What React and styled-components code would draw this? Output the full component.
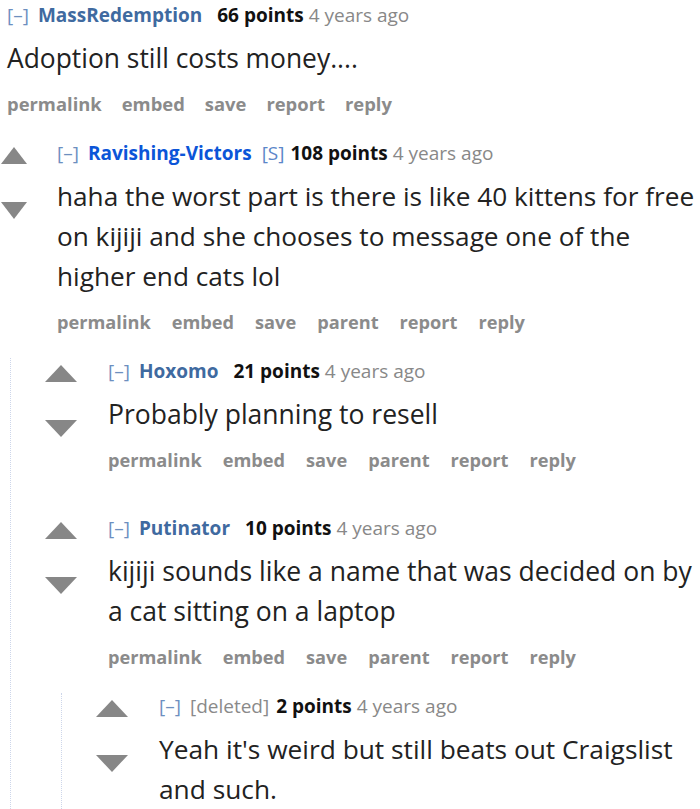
import styled, { createGlobalStyle } from 'styled-components'

const GlobalStyle = createGlobalStyle`
  body {
    margin: 0;
    background: #ffffff;
    font-family: "Open Sans", "Noto Sans", sans-serif;
  }
`

const Page = styled.div`
  width: 700px;
  height: 809px;
  overflow: hidden;
  padding: 2px 0 0 7px;
  box-sizing: border-box;
`

const Row = styled.div`
  display: flex;
  align-items: flex-start;
`

const Votes = styled.div`
  width: ${props => props.$w}px;
  flex: none;
  display: flex;
  flex-direction: column;
  gap: 38px;
  padding-top: 7px;
  margin-right: ${props => props.$space}px;
`

const Arrow = styled.div`
  width: 0;
  height: 0;
  border-left: ${props => props.$w / 2}px solid transparent;
  border-right: ${props => props.$w / 2}px solid transparent;
  ${props => props.$down
    ? `border-top: 17px solid #878787;`
    : `border-bottom: 17px solid #878787;`}
`

const Entry = styled.div`
  flex: 1;
  min-width: 0;
`

const Tagline = styled.div`
  font-size: 19px;
  line-height: 26px;
  color: #888888;
  white-space: nowrap;
`

const Toggle = styled.span`
  color: #6d8fbf;
  margin-right: 9px;
`

const Author = styled.span`
  font-weight: 700;
  color: ${props => (props.$op ? '#0b55d8' : '#3f6aa0')};
  margin-right: ${props => (props.$op ? 10 : 15)}px;
`

const Deleted = styled.span`
  color: #8a8a8a;
  margin-right: 7px;
`

const Flair = styled.span`
  color: #5b86c9;
  margin-right: 6px;
`

const Score = styled.span`
  font-weight: 700;
  color: #111111;
  margin-right: 5px;
`

const Body = styled.div`
  font-size: ${props => props.$size}px;
  line-height: 40px;
  color: #222222;
  margin: 10px 0 14px;
  padding-right: 4px;
`

const Buttons = styled.ul`
  list-style: none;
  display: flex;
  gap: ${props => props.$gap}px;
  margin: 0;
  padding: 0;
  font-size: ${props => props.$size}px;
  line-height: 24px;
  font-weight: 700;
  color: #8b8b8b;
`

const Child = styled.div`
  margin-left: -47px;
  padding-left: ${props => props.$pad}px;
  margin-top: 24px;
  border-left: 1px dotted ${props => (props.$line ? '#cdd6ea' : 'transparent')};
`

const Sibling = styled.div`
  margin-top: 43px;
`

const bodySizes = [26.4, 26.2, 26.5, 26.3]
const arrowWidths = [0, 27, 33, 33]
const spaces = [0, 29, 30, 30]

const Comment = ({ c, depth, children }) => (
  <Row>
    {depth > 0 && (
      <Votes $w={arrowWidths[depth]} $space={spaces[depth]}>
        <Arrow $w={arrowWidths[depth]} />
        <Arrow $w={arrowWidths[depth]} $down />
      </Votes>
    )}
    <Entry>
      <Tagline>
        <Toggle>[–]</Toggle>
        {c.deleted ? <Deleted>[deleted]</Deleted> : <Author $op={c.op}>{c.author}</Author>}
        {c.op && <Flair>[S]</Flair>}
        <Score>{c.points} points</Score>
        4 years ago
      </Tagline>
      <Body $size={bodySizes[depth]}>{c.text}</Body>
      {c.buttons && (
        <Buttons $size={depth === 0 ? 18.4 : 18.2} $gap={depth === 0 ? 20 : 21}>
          {c.buttons.map(b => <li key={b}>{b}</li>)}
        </Buttons>
      )}
      {children}
    </Entry>
  </Row>
)

const base = ['permalink', 'embed', 'save', 'report', 'reply']
const nested = ['permalink', 'embed', 'save', 'parent', 'report', 'reply']

export default function App() {
  return (
    <>
      <GlobalStyle />
      <Page>
        <Comment depth={0} c={{ author: 'MassRedemption', points: 66, text: 'Adoption still costs money....', buttons: base }}>
          <Child $pad={40}>
            <Comment depth={1} c={{ author: 'Ravishing-Victors', op: true, points: 108, text: 'haha the worst part is there is like 40 kittens for free on kijiji and she chooses to message one of the higher end cats lol', buttons: nested }}>
              <Child $pad={34} $line>
                <Comment depth={2} c={{ author: 'Hoxomo', points: 21, text: 'Probably planning to resell', buttons: nested }} />
                <Sibling>
                  <Comment depth={2} c={{ author: 'Putinator', points: 10, text: 'kijiji sounds like a name that was decided on by a cat sitting on a laptop', buttons: nested }}>
                    <Child $pad={34} $line>
                      <Comment depth={3} c={{ deleted: true, points: 2, text: "Yeah it's weird but still beats out Craigslist and such." }} />
                    </Child>
                  </Comment>
                </Sibling>
              </Child>
            </Comment>
          </Child>
        </Comment>
      </Page>
    </>
  )
}
